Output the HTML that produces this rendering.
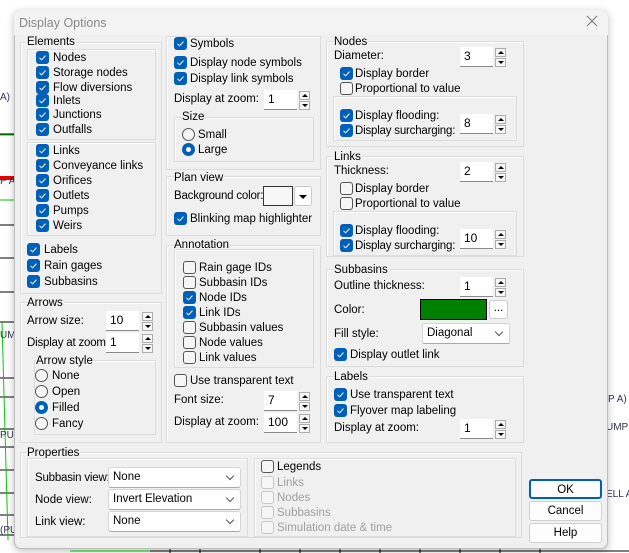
<!DOCTYPE html><html><head><style>
*{box-sizing:border-box}
body{margin:0;width:629px;height:553px;overflow:hidden;background:#fff;font-family:"Liberation Sans",sans-serif;font-size:11.5px;color:#000;position:relative}
.a{position:absolute}
.dlg{position:absolute;left:14px;top:10px;width:594px;height:539px;background:#f0f0f0;border:1px solid #bdbdbd;border-radius:7px;box-shadow:0 2px 8px rgba(0,0,0,.25)}
.tb{position:absolute;left:14px;top:10px;width:594px;height:25px;background:#f3f3f3;border-radius:7px 7px 0 0}
.g{position:absolute;border:1px solid #dcdcdc;box-shadow:inset 1px 1px 0 #fff}
.t{position:absolute;white-space:nowrap;line-height:14px}
.h{background:#f0f0f0;padding-right:1px}
.cb{position:absolute;width:13px;height:13px;border-radius:3px;background:#005fb8}
.cb svg{position:absolute;left:0;top:0}
.ub{position:absolute;width:13px;height:13px;border-radius:3px;border:1px solid #555;background:#f6f6f6}
.dis{border-color:#c8c8c8}
.rb{position:absolute;width:13px;height:13px;border-radius:50%;border:1px solid #555;background:#f6f6f6}
.rs{position:absolute;width:13px;height:13px;border-radius:50%;background:#005fb8}
.rs::after{content:"";position:absolute;left:4px;top:4px;width:5px;height:5px;border-radius:50%;background:#fff}
.in{position:absolute;background:#fff;border-bottom:1px solid #8a8a8a;padding-left:4px;line-height:19px;font-size:12px}
.sp{position:absolute;width:11px;height:9px;border:1px solid #adadad;background:#f6f6f6}
.sp::after{content:"";position:absolute;left:2px;top:2px;border-left:3px solid transparent;border-right:3px solid transparent}
.up::after{border-bottom:3px solid #000}
.dn::after{border-top:3px solid #000}
.sel{position:absolute;background:#fff;border:1px solid #d5d5d5;border-bottom-color:#aaa;border-radius:3px;padding-left:4px;line-height:18px}
.sel::after{content:"";position:absolute;right:7px;top:5px;width:5px;height:5px;border-right:1px solid #555;border-bottom:1px solid #555;transform:rotate(45deg)}
.btn{position:absolute;left:529px;width:73px;height:20px;background:#fdfdfd;border:1px solid #d0d0d0;border-radius:3px;text-align:center;line-height:18px}
.gr{color:#a0a0a0}
</style></head><body>
<svg class="a" style="left:0;top:0" width="629" height="553">
<g stroke="#000" stroke-width="1" fill="none">
<path d="M0 134H14M0 225H14M0 258H14M0 292H14M0 322H14M0 378H14M0 397H14M0 429H14M0 447H14M0 470H14M0 493H14M0 515H14M0 535H14"/>
<path d="M80 551H629M170 549V553M200 549V553M260 549V553M300 549V553M340 549V553M380 549V553M420 549V553M460 549V553M500 549V553M540 549V553"/>
</g>
<path d="M0 135H14M0 200H14M2 322L8 540M70 551H150" stroke="#0c0" stroke-width="1" fill="none"/>
<rect x="0" y="176" width="14" height="4" fill="#e00"/>
<text x="0" y="100" font-size="10" fill="#335">A)</text>
<text x="0" y="184" font-size="10" fill="#335">P A)</text>
<text x="0" y="338" font-size="10" fill="#335">UMP</text>
<text x="0" y="438" font-size="10" fill="#335">PUM</text>
<text x="0" y="533" font-size="10" fill="#335">(PU</text>
<text x="608" y="402" font-size="10" fill="#335">P A)</text>
<text x="606" y="430" font-size="10" fill="#335">UMP A</text>
<text x="606" y="497" font-size="10" fill="#335">ELL A</text>
</svg>
<div class="dlg"></div><div class="tb"></div>
<div class="t" style="left:19px;top:16px;color:#888;font-size:12.5px">Display Options</div>
<svg class="a" style="left:586px;top:15px" width="12" height="12"><path d="M1 1L11 11M11 1L1 11" stroke="#777" stroke-width="1"/></svg>

<div class="g" style="left:20px;top:42px;width:142px;height:252px"></div>
<div class="t h" style="left:27px;top:35px">Elements</div>
<div class="g" style="left:27px;top:49px;width:129px;height:91px"></div>
<div class="g" style="left:27px;top:142px;width:129px;height:94px"></div>

<div class="g" style="left:166px;top:36px;width:155px;height:134px"></div>
<div class="g" style="left:174px;top:117px;width:140px;height:45px"></div>
<div class="t h" style="left:182px;top:110px">Size</div>
<div class="g" style="left:166px;top:176px;width:155px;height:60px"></div>
<div class="t h" style="left:174px;top:171px">Plan view</div>
<div class="g" style="left:166px;top:245px;width:155px;height:198px"></div>
<div class="t h" style="left:174px;top:238px">Annotation</div>
<div class="g" style="left:174px;top:249px;width:140px;height:119px"></div>

<div class="g" style="left:20px;top:302px;width:142px;height:141px"></div>
<div class="t h" style="left:27px;top:296px">Arrows</div>
<div class="g" style="left:34px;top:360px;width:122px;height:75px"></div>
<div class="t h" style="left:36px;top:354px">Arrow style</div>

<div class="g" style="left:326px;top:41px;width:198px;height:106px"></div>
<div class="t h" style="left:334px;top:35px">Nodes</div>
<div class="g" style="left:333px;top:96px;width:184px;height:45px"></div>
<div class="g" style="left:326px;top:156px;width:198px;height:101px"></div>
<div class="t h" style="left:334px;top:150px">Links</div>
<div class="g" style="left:333px;top:211px;width:184px;height:45px"></div>
<div class="g" style="left:326px;top:269px;width:198px;height:98px"></div>
<div class="t h" style="left:334px;top:263px">Subbasins</div>
<div class="g" style="left:326px;top:376px;width:198px;height:67px"></div>
<div class="t h" style="left:334px;top:370px">Labels</div>

<div class="g" style="left:20px;top:452px;width:502px;height:86px"></div>
<div class="t h" style="left:27px;top:446px">Properties</div>
<div class="g" style="left:27px;top:458px;width:221px;height:79px"></div>
<div class="g" style="left:254px;top:458px;width:262px;height:79px"></div>

<div class="cb" style="left:36px;top:51px"><svg width="13" height="13"><path d="M3.5 6.8L5.6 8.8L9.5 4.6" stroke="#fff" fill="none"/></svg></div><div class="t" style="left:53px;top:51px">Nodes</div>
<div class="cb" style="left:36px;top:66px"><svg width="13" height="13"><path d="M3.5 6.8L5.6 8.8L9.5 4.6" stroke="#fff" fill="none"/></svg></div><div class="t" style="left:53px;top:66px">Storage nodes</div>
<div class="cb" style="left:36px;top:81px"><svg width="13" height="13"><path d="M3.5 6.8L5.6 8.8L9.5 4.6" stroke="#fff" fill="none"/></svg></div><div class="t" style="left:53px;top:81px">Flow diversions</div>
<div class="cb" style="left:36px;top:94px"><svg width="13" height="13"><path d="M3.5 6.8L5.6 8.8L9.5 4.6" stroke="#fff" fill="none"/></svg></div><div class="t" style="left:53px;top:94px">Inlets</div>
<div class="cb" style="left:36px;top:108px"><svg width="13" height="13"><path d="M3.5 6.8L5.6 8.8L9.5 4.6" stroke="#fff" fill="none"/></svg></div><div class="t" style="left:53px;top:108px">Junctions</div>
<div class="cb" style="left:36px;top:123px"><svg width="13" height="13"><path d="M3.5 6.8L5.6 8.8L9.5 4.6" stroke="#fff" fill="none"/></svg></div><div class="t" style="left:53px;top:123px">Outfalls</div>
<div class="cb" style="left:36px;top:144px"><svg width="13" height="13"><path d="M3.5 6.8L5.6 8.8L9.5 4.6" stroke="#fff" fill="none"/></svg></div><div class="t" style="left:53px;top:144px">Links</div>
<div class="cb" style="left:36px;top:159px"><svg width="13" height="13"><path d="M3.5 6.8L5.6 8.8L9.5 4.6" stroke="#fff" fill="none"/></svg></div><div class="t" style="left:53px;top:159px">Conveyance links</div>
<div class="cb" style="left:36px;top:174px"><svg width="13" height="13"><path d="M3.5 6.8L5.6 8.8L9.5 4.6" stroke="#fff" fill="none"/></svg></div><div class="t" style="left:53px;top:174px">Orifices</div>
<div class="cb" style="left:36px;top:189px"><svg width="13" height="13"><path d="M3.5 6.8L5.6 8.8L9.5 4.6" stroke="#fff" fill="none"/></svg></div><div class="t" style="left:53px;top:189px">Outlets</div>
<div class="cb" style="left:36px;top:204px"><svg width="13" height="13"><path d="M3.5 6.8L5.6 8.8L9.5 4.6" stroke="#fff" fill="none"/></svg></div><div class="t" style="left:53px;top:204px">Pumps</div>
<div class="cb" style="left:36px;top:219px"><svg width="13" height="13"><path d="M3.5 6.8L5.6 8.8L9.5 4.6" stroke="#fff" fill="none"/></svg></div><div class="t" style="left:53px;top:219px">Weirs</div>
<div class="cb" style="left:27px;top:243px"><svg width="13" height="13"><path d="M3.5 6.8L5.6 8.8L9.5 4.6" stroke="#fff" fill="none"/></svg></div><div class="t" style="left:44px;top:243px">Labels</div>
<div class="cb" style="left:27px;top:259px"><svg width="13" height="13"><path d="M3.5 6.8L5.6 8.8L9.5 4.6" stroke="#fff" fill="none"/></svg></div><div class="t" style="left:44px;top:259px">Rain gages</div>
<div class="cb" style="left:27px;top:275px"><svg width="13" height="13"><path d="M3.5 6.8L5.6 8.8L9.5 4.6" stroke="#fff" fill="none"/></svg></div><div class="t" style="left:44px;top:275px">Subbasins</div>

<div class="t" style="left:27px;top:314px">Arrow size:</div>
<div class="in" style="left:106px;top:311px;width:33px;height:20px">10</div>
<div class="sp up" style="left:142px;top:312px"></div><div class="sp dn" style="left:142px;top:322px"></div>
<div class="t" style="left:27px;top:336px;letter-spacing:-0.2px">Display at zoom:</div>
<div class="in" style="left:106px;top:333px;width:33px;height:20px">1</div>
<div class="sp up" style="left:142px;top:334px"></div><div class="sp dn" style="left:142px;top:344px"></div>
<div class="rb" style="left:35px;top:369px"></div><div class="t" style="left:52px;top:369px">None</div>
<div class="rb" style="left:35px;top:385px"></div><div class="t" style="left:52px;top:385px">Open</div>
<div class="rs" style="left:35px;top:401px"></div><div class="t" style="left:52px;top:401px">Filled</div>
<div class="rb" style="left:35px;top:417px"></div><div class="t" style="left:52px;top:417px">Fancy</div>

<div class="cb" style="left:174px;top:37px"><svg width="13" height="13"><path d="M3.5 6.8L5.6 8.8L9.5 4.6" stroke="#fff" fill="none"/></svg></div><div class="t" style="left:190px;top:37px">Symbols</div>
<div class="cb" style="left:174px;top:56px"><svg width="13" height="13"><path d="M3.5 6.8L5.6 8.8L9.5 4.6" stroke="#fff" fill="none"/></svg></div><div class="t" style="left:190px;top:56px">Display node symbols</div>
<div class="cb" style="left:174px;top:72px"><svg width="13" height="13"><path d="M3.5 6.8L5.6 8.8L9.5 4.6" stroke="#fff" fill="none"/></svg></div><div class="t" style="left:190px;top:72px">Display link symbols</div>
<div class="t" style="left:174px;top:92px">Display at zoom:</div>
<div class="in" style="left:264px;top:90px;width:33px;height:20px">1</div>
<div class="sp up" style="left:299px;top:91px"></div><div class="sp dn" style="left:299px;top:101px"></div>
<div class="rb" style="left:182px;top:128px"></div><div class="t" style="left:198px;top:128px">Small</div>
<div class="rs" style="left:182px;top:143px"></div><div class="t" style="left:198px;top:143px">Large</div>
<div class="t" style="left:174px;top:189px;letter-spacing:-0.2px">Background color:</div>
<div class="a" style="left:263px;top:186px;width:30px;height:20px;background:#f6f6f6;border:1px solid #333"></div>
<div class="a" style="left:294px;top:186px;width:18px;height:20px;background:#fdfdfd;border:1px solid #ccc;border-radius:3px"></div>
<div class="a" style="left:299px;top:195px;border-left:4px solid transparent;border-right:4px solid transparent;border-top:4px solid #000"></div>
<div class="cb" style="left:174px;top:212px"><svg width="13" height="13"><path d="M3.5 6.8L5.6 8.8L9.5 4.6" stroke="#fff" fill="none"/></svg></div><div class="t" style="left:190px;top:212px">Blinking map highlighter</div>

<div class="ub" style="left:183px;top:261px"></div><div class="t" style="left:199px;top:261px">Rain gage IDs</div>
<div class="ub" style="left:183px;top:276px"></div><div class="t" style="left:199px;top:276px">Subbasin IDs</div>
<div class="cb" style="left:183px;top:291px"><svg width="13" height="13"><path d="M3.5 6.8L5.6 8.8L9.5 4.6" stroke="#fff" fill="none"/></svg></div><div class="t" style="left:199px;top:291px">Node IDs</div>
<div class="cb" style="left:183px;top:306px"><svg width="13" height="13"><path d="M3.5 6.8L5.6 8.8L9.5 4.6" stroke="#fff" fill="none"/></svg></div><div class="t" style="left:199px;top:306px">Link IDs</div>
<div class="ub" style="left:183px;top:321px"></div><div class="t" style="left:199px;top:321px">Subbasin values</div>
<div class="ub" style="left:183px;top:336px"></div><div class="t" style="left:199px;top:336px">Node values</div>
<div class="ub" style="left:183px;top:351px"></div><div class="t" style="left:199px;top:351px">Link values</div>
<div class="ub" style="left:174px;top:374px"></div><div class="t" style="left:190px;top:374px">Use transparent text</div>
<div class="t" style="left:174px;top:393px">Font size:</div>
<div class="in" style="left:264px;top:391px;width:33px;height:20px">7</div>
<div class="sp up" style="left:299px;top:392px"></div><div class="sp dn" style="left:299px;top:402px"></div>
<div class="t" style="left:174px;top:415px">Display at zoom:</div>
<div class="in" style="left:264px;top:413px;width:33px;height:20px">100</div>
<div class="sp up" style="left:299px;top:414px"></div><div class="sp dn" style="left:299px;top:424px"></div>

<div class="t" style="left:334px;top:49px">Diameter:</div>
<div class="in" style="left:460px;top:47px;width:33px;height:20px">3</div>
<div class="sp up" style="left:495px;top:48px"></div><div class="sp dn" style="left:495px;top:58px"></div>
<div class="cb" style="left:340px;top:67px"><svg width="13" height="13"><path d="M3.5 6.8L5.6 8.8L9.5 4.6" stroke="#fff" fill="none"/></svg></div><div class="t" style="left:355px;top:67px">Display border</div>
<div class="ub" style="left:340px;top:82px"></div><div class="t" style="left:355px;top:82px">Proportional to value</div>
<div class="cb" style="left:340px;top:109px"><svg width="13" height="13"><path d="M3.5 6.8L5.6 8.8L9.5 4.6" stroke="#fff" fill="none"/></svg></div><div class="t" style="left:355px;top:109px">Display flooding:</div>
<div class="cb" style="left:340px;top:124px"><svg width="13" height="13"><path d="M3.5 6.8L5.6 8.8L9.5 4.6" stroke="#fff" fill="none"/></svg></div><div class="t" style="left:355px;top:124px;letter-spacing:-0.2px">Display surcharging:</div>
<div class="in" style="left:460px;top:114px;width:33px;height:20px">8</div>
<div class="sp up" style="left:495px;top:115px"></div><div class="sp dn" style="left:495px;top:125px"></div>

<div class="t" style="left:334px;top:164px">Thickness:</div>
<div class="in" style="left:460px;top:162px;width:33px;height:20px">2</div>
<div class="sp up" style="left:495px;top:163px"></div><div class="sp dn" style="left:495px;top:173px"></div>
<div class="ub" style="left:340px;top:182px"></div><div class="t" style="left:355px;top:182px">Display border</div>
<div class="ub" style="left:340px;top:197px"></div><div class="t" style="left:355px;top:197px">Proportional to value</div>
<div class="cb" style="left:340px;top:224px"><svg width="13" height="13"><path d="M3.5 6.8L5.6 8.8L9.5 4.6" stroke="#fff" fill="none"/></svg></div><div class="t" style="left:355px;top:224px">Display flooding:</div>
<div class="cb" style="left:340px;top:239px"><svg width="13" height="13"><path d="M3.5 6.8L5.6 8.8L9.5 4.6" stroke="#fff" fill="none"/></svg></div><div class="t" style="left:355px;top:239px;letter-spacing:-0.2px">Display surcharging:</div>
<div class="in" style="left:460px;top:229px;width:33px;height:20px">10</div>
<div class="sp up" style="left:495px;top:230px"></div><div class="sp dn" style="left:495px;top:240px"></div>

<div class="t" style="left:334px;top:279px">Outline thickness:</div>
<div class="in" style="left:460px;top:277px;width:33px;height:20px">1</div>
<div class="sp up" style="left:495px;top:278px"></div><div class="sp dn" style="left:495px;top:288px"></div>
<div class="t" style="left:334px;top:303px">Color:</div>
<div class="a" style="left:420px;top:299px;width:67px;height:21px;background:#008000;border:1px solid #000"></div>
<div class="a" style="left:489px;top:300px;width:19px;height:19px;background:#fdfdfd;border:1px solid #ccc;border-radius:3px;text-align:center;line-height:14px">...</div>
<div class="t" style="left:334px;top:327px">Fill style:</div>
<div class="sel" style="left:422px;top:323px;width:88px;height:21px;border-radius:2px">Diagonal</div>
<div class="cb" style="left:334px;top:348px"><svg width="13" height="13"><path d="M3.5 6.8L5.6 8.8L9.5 4.6" stroke="#fff" fill="none"/></svg></div><div class="t" style="left:350px;top:348px">Display outlet link</div>

<div class="cb" style="left:334px;top:388px"><svg width="13" height="13"><path d="M3.5 6.8L5.6 8.8L9.5 4.6" stroke="#fff" fill="none"/></svg></div><div class="t" style="left:350px;top:388px">Use transparent text</div>
<div class="cb" style="left:334px;top:404px"><svg width="13" height="13"><path d="M3.5 6.8L5.6 8.8L9.5 4.6" stroke="#fff" fill="none"/></svg></div><div class="t" style="left:350px;top:404px">Flyover map labeling</div>
<div class="t" style="left:334px;top:421px">Display at zoom:</div>
<div class="in" style="left:460px;top:419px;width:33px;height:20px">1</div>
<div class="sp up" style="left:495px;top:420px"></div><div class="sp dn" style="left:495px;top:430px"></div>

<div class="t" style="left:35px;top:471px;letter-spacing:-0.2px">Subbasin view:</div>
<div class="sel" style="left:108px;top:467px;width:133px;height:21px">None</div>
<div class="t" style="left:35px;top:493px">Node view:</div>
<div class="sel" style="left:108px;top:489px;width:133px;height:21px">Invert Elevation</div>
<div class="t" style="left:35px;top:515px">Link view:</div>
<div class="sel" style="left:108px;top:511px;width:133px;height:21px">None</div>

<div class="ub" style="left:261px;top:460px"></div><div class="t h" style="left:277px;top:460px">Legends</div>
<div class="ub dis" style="left:261px;top:476px"></div><div class="t gr" style="left:277px;top:476px">Links</div>
<div class="ub dis" style="left:261px;top:491px"></div><div class="t gr" style="left:277px;top:491px">Nodes</div>
<div class="ub dis" style="left:261px;top:506px"></div><div class="t gr" style="left:277px;top:506px">Subbasins</div>
<div class="ub dis" style="left:261px;top:521px"></div><div class="t gr" style="left:277px;top:521px">Simulation date &amp; time</div>

<div class="btn" style="top:479px;border:2px solid #005fb8">OK</div>
<div class="btn" style="top:501px">Cancel</div>
<div class="btn" style="top:523px">Help</div>
</body></html>
